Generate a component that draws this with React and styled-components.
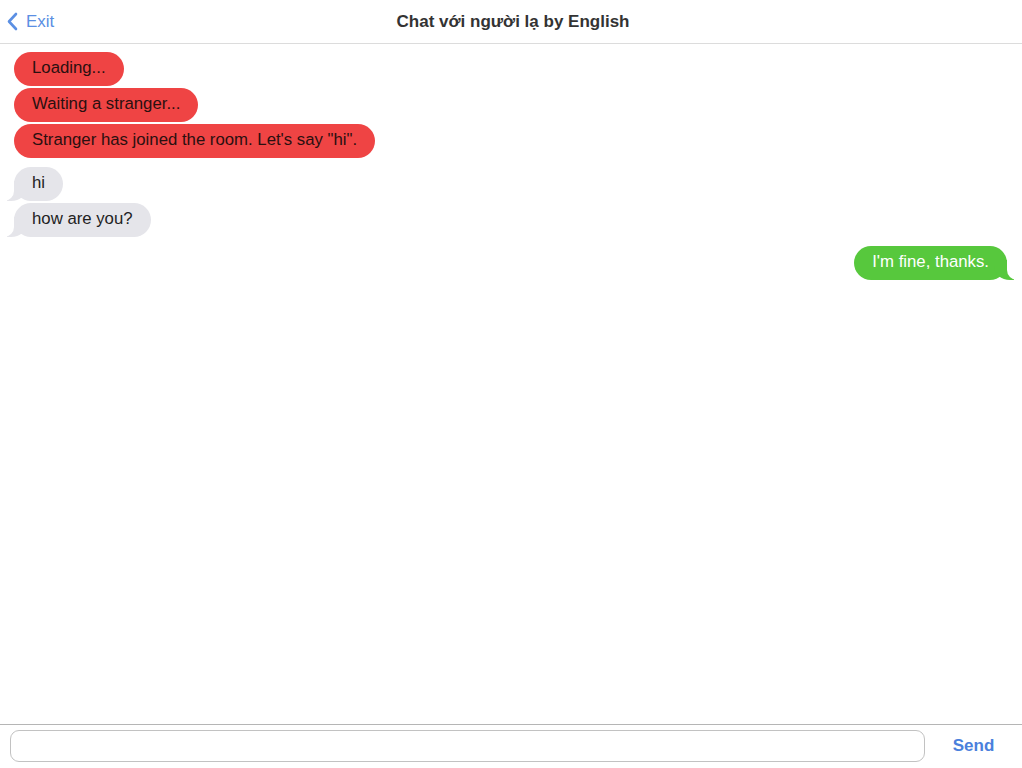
import React from "react"
import styled, { createGlobalStyle, css } from "styled-components"

const GlobalStyle = createGlobalStyle`
  html, body, #root {
    margin: 0;
    height: 100%;
  }
  body {
    font-family: "Liberation Sans", Arial, sans-serif;
    background: #fff;
  }
`

const Page = styled.div`
  display: flex;
  flex-direction: column;
  height: 100vh;
`

const Header = styled.header`
  display: grid;
  grid-template-columns: 124px 1fr 120px;
  align-items: center;
  height: 43px;
  border-bottom: 1px solid #dcdcdc;
`

const ExitButton = styled.button`
  display: flex;
  align-items: center;
  gap: 8px;
  border: none;
  background: none;
  padding: 0 0 0 6px;
  font-family: inherit;
  font-size: 17px;
  color: #5b8fe3;
  cursor: pointer;
`

const Title = styled.h1`
  margin: 0;
  text-align: center;
  font-size: 17px;
  font-weight: bold;
  color: #333;
`

const Messages = styled.main`
  flex: 1;
  display: flex;
  flex-direction: column;
  padding: 8px 15px 8px 14px;
  overflow-y: auto;
`

const Group = styled.div`
  display: flex;
  flex-direction: column;
  align-items: ${(p) => (p.$mine ? "flex-end" : "flex-start")};
  gap: 2px;
  margin-bottom: 9px;
`

const tail = (color, side) => css`
  &::before,
  &::after {
    content: "";
    position: absolute;
    bottom: 0;
    height: 20px;
  }
  &::before {
    ${side}: -7px;
    width: 20px;
    background: ${color};
    ${side === "left"
      ? "border-bottom-right-radius: 16px 14px;"
      : "border-bottom-left-radius: 16px 14px;"}
  }
  &::after {
    ${side}: -26px;
    width: 26px;
    background: #fff;
    ${side === "left"
      ? "border-bottom-right-radius: 10px;"
      : "border-bottom-left-radius: 10px;"}
  }
`

const Bubble = styled.div`
  position: relative;
  padding: 6px 18px 8px;
  border-radius: 17px;
  font-size: 16.75px;
  line-height: 20px;
  ${(p) =>
    p.$kind === "system" &&
    css`
      background: #ef4444;
      color: #2a1010;
    `}
  ${(p) =>
    p.$kind === "them" &&
    css`
      background: #e5e5ea;
      color: #222;
      ${tail("#e5e5ea", "left")}
    `}
  ${(p) =>
    p.$kind === "me" &&
    css`
      background: #57c83d;
      color: #fff;
      ${tail("#57c83d", "right")}
    `}
`

const Footer = styled.footer`
  display: flex;
  align-items: center;
  height: 44px;
  border-top: 1px solid #b5b5b5;
  padding-left: 10px;
  box-sizing: border-box;
`

const Input = styled.input`
  flex: 1;
  height: 32px;
  box-sizing: border-box;
  border: 1px solid #c2c2c2;
  border-radius: 9px;
  padding: 0 10px;
  font-family: inherit;
  font-size: 16px;
  outline: none;
  margin-bottom: 2px;
`

const SendButton = styled.button`
  flex: 0 0 97px;
  border: none;
  background: none;
  font-family: inherit;
  font-size: 17px;
  font-weight: bold;
  color: #4a80dc;
  cursor: pointer;
  padding: 0 0 2px;
`

const ChevronLeft = () => (
  <svg width="12" height="19" viewBox="0 0 12 19">
    <path
      d="M10 2 L3 9.5 L10 17"
      fill="none"
      stroke="#5b8fe3"
      strokeWidth="2.6"
      strokeLinecap="round"
      strokeLinejoin="round"
    />
  </svg>
)

const systemMessages = [
  "Loading...",
  "Waiting a stranger...",
  'Stranger has joined the room. Let\'s say "hi".',
]

const theirMessages = ["hi", "how are you?"]

export default function App() {
  return (
    <>
      <GlobalStyle />
      <Page>
        <Header>
          <ExitButton>
            <ChevronLeft />
            Exit
          </ExitButton>
          <Title>Chat với người lạ by English</Title>
          <div />
        </Header>
        <Messages>
          <Group>
            {systemMessages.map((m) => (
              <Bubble key={m} $kind="system">
                {m}
              </Bubble>
            ))}
          </Group>
          <Group>
            {theirMessages.map((m) => (
              <Bubble key={m} $kind="them">
                {m}
              </Bubble>
            ))}
          </Group>
          <Group $mine>
            <Bubble $kind="me">I'm fine, thanks.</Bubble>
          </Group>
        </Messages>
        <Footer>
          <Input />
          <SendButton>Send</SendButton>
        </Footer>
      </Page>
    </>
  )
}
